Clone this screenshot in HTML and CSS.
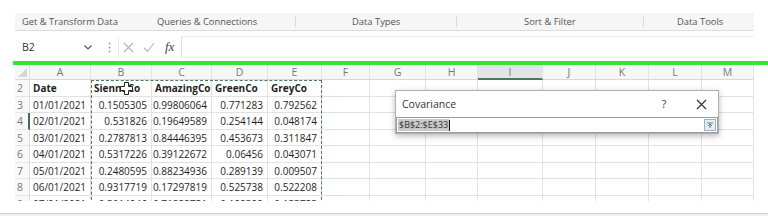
FILE: index.html
```html
<!DOCTYPE html>
<html>
<head>
<meta charset="utf-8">
<link rel="stylesheet" href="styles.css">
</head>
<body>
<div class="ribbon">
  <div class="grp g1">Get &amp; Transform Data</div>
  <div class="grp g2">Queries &amp; Connections</div>
  <div class="grp g3 sep">Data Types</div>
  <div class="grp g4 sep">Sort &amp; Filter</div>
  <div class="grp g5 sep">Data Tools</div>
</div>

<div class="formula">
  <div class="namebox"><span>B2</span>
    <svg width="8" height="5" viewBox="0 0 8 5"><path d="M0.5 0.5 L4 4 L7.5 0.5" fill="none" stroke="#555" stroke-width="1.2"/></svg>
  </div>
  <div class="dots"><svg width="3" height="11" viewBox="0 0 3 11"><circle cx="1.5" cy="1.5" r="0.9" fill="#999"/><circle cx="1.5" cy="5.5" r="0.9" fill="#999"/><circle cx="1.5" cy="9.5" r="0.9" fill="#999"/></svg></div>
  <div class="fxbtns">
    <svg class="ico" width="11" height="11" viewBox="0 0 11 11"><path d="M1 1 L10 10 M10 1 L1 10" stroke="#b4b4b4" stroke-width="1.1"/></svg>
    <svg class="ico" width="12" height="11" viewBox="0 0 12 11"><path d="M1 6 L4.5 9.5 L11 1" fill="none" stroke="#b4b4b4" stroke-width="1.1"/></svg>
    <span class="fx">fx</span>
  </div>
  <div class="finput"></div>
</div>

<div class="green"></div>

<div class="sheet">
  <div class="corner"><svg width="10" height="10" viewBox="0 0 10 10"><path d="M10 1 L10 10 L1 10 Z" fill="#d6d6d6"/></svg></div>
  <div class="ch">A</div><div class="ch">B</div><div class="ch">C</div><div class="ch">D</div><div class="ch">E</div><div class="ch">F</div><div class="ch">G</div><div class="ch">H</div><div class="ch act">I</div><div class="ch">J</div><div class="ch">K</div><div class="ch">L</div><div class="ch">M</div>

  <div class="rh">2</div><div class="c t b">Date</div><div class="c t b">SiennaCo</div><div class="c t b">AmazingCo</div><div class="c t b">GreenCo</div><div class="c t b">GreyCo</div><div class="c"></div><div class="c"></div><div class="c"></div><div class="c"></div><div class="c"></div><div class="c"></div><div class="c"></div><div class="c"></div>

  <div class="rh">3</div><div class="c t">01/01/2021</div><div class="c">0.1505305</div><div class="c">0.99806064</div><div class="c">0.771283</div><div class="c">0.792562</div><div class="c"></div><div class="c"></div><div class="c"></div><div class="c"></div><div class="c"></div><div class="c"></div><div class="c"></div><div class="c"></div>

  <div class="rh actr">4</div><div class="c t">02/01/2021</div><div class="c">0.531826</div><div class="c">0.19649589</div><div class="c">0.254144</div><div class="c">0.048174</div><div class="c"></div><div class="c"></div><div class="c"></div><div class="c"></div><div class="c"></div><div class="c"></div><div class="c"></div><div class="c"></div>

  <div class="rh">5</div><div class="c t">03/01/2021</div><div class="c">0.2787813</div><div class="c">0.84446395</div><div class="c">0.453673</div><div class="c">0.311847</div><div class="c"></div><div class="c"></div><div class="c"></div><div class="c"></div><div class="c"></div><div class="c"></div><div class="c"></div><div class="c"></div>

  <div class="rh">6</div><div class="c t">04/01/2021</div><div class="c">0.5317226</div><div class="c">0.39122672</div><div class="c">0.06456</div><div class="c">0.043071</div><div class="c"></div><div class="c"></div><div class="c"></div><div class="c"></div><div class="c"></div><div class="c"></div><div class="c"></div><div class="c"></div>

  <div class="rh">7</div><div class="c t">05/01/2021</div><div class="c">0.2480595</div><div class="c">0.88234936</div><div class="c">0.289139</div><div class="c">0.009507</div><div class="c"></div><div class="c"></div><div class="c"></div><div class="c"></div><div class="c"></div><div class="c"></div><div class="c"></div><div class="c"></div>

  <div class="rh">8</div><div class="c t">06/01/2021</div><div class="c">0.9317719</div><div class="c">0.17297819</div><div class="c">0.525738</div><div class="c">0.522208</div><div class="c"></div><div class="c"></div><div class="c"></div><div class="c"></div><div class="c"></div><div class="c"></div><div class="c"></div><div class="c"></div>

  <div class="rh">9</div><div class="c t">07/01/2021</div><div class="c">0.3014946</div><div class="c">0.71232751</div><div class="c">0.198399</div><div class="c">0.133753</div><div class="c"></div><div class="c"></div><div class="c"></div><div class="c"></div><div class="c"></div><div class="c"></div><div class="c"></div><div class="c"></div>

  <div class="ants"></div>
  <svg class="cursor" width="13" height="13" viewBox="0 0 13 13"><path d="M4.5 0.5 H8.5 V4.5 H12.5 V8.5 H8.5 V12.5 H4.5 V8.5 H0.5 V4.5 H4.5 Z" fill="#fff" stroke="#222" stroke-width="1"/></svg>
</div>

<div class="bottom"></div>

<div class="dialog">
  <div class="dtitle">
    <span class="dname">Covariance</span>
    <span class="help">?</span>
    <svg class="close" width="11" height="11" viewBox="0 0 11 11"><path d="M1 1 L10 10 M10 1 L1 10" stroke="#333" stroke-width="1.2"/></svg>
  </div>
  <div class="dinput">
    <span class="sel">$B$2:$E$33</span><span class="caret"></span>
    <span class="collapse"><svg width="8" height="8" viewBox="0 0 8 8"><path d="M1 2 H7 M4 3 V7 M2 5 L4 3 L6 5" fill="none" stroke="#5a7a9a" stroke-width="1"/></svg></span>
  </div>
</div>
</body>
</html>
```
FILE: styles.css
```css
* { box-sizing: border-box; margin: 0; padding: 0; }
body {
  width: 768px;
  height: 216px;
  overflow: hidden;
  background: #fff;
  font-family: "Open Sans", "Noto Sans", sans-serif;
  color: #222;
  position: relative;
}
.ribbon {
  display: flex;
  margin: 13px 0 0 15px;
  width: 739px;
  height: 18px;
  background: #f6f6f6;
  border-bottom: 1px solid #dcdcdc;
  font-size: 9.4px;
  color: #555;
  line-height: 17px;
}
.grp { position: relative; white-space: nowrap; }
.grp.sep::before {
  content: "";
  position: absolute;
  left: 0; top: 3px; height: 11px;
  border-left: 1px solid #dadada;
}
.g1 { width: 125px; padding-left: 7px; }
.g2 { width: 155px; padding-left: 17px; }
.g3 { width: 161px; padding-left: 57px; }
.g4 { width: 187px; padding-left: 68px; }
.g5 { width: 111px; padding-left: 34px; }

.formula {
  display: flex;
  align-items: center;
  margin: 5px 0 0 15px;
  width: 739px;
  height: 22px;
}
.namebox {
  width: 85px;
  height: 22px;
  display: flex;
  align-items: center;
  justify-content: space-between;
  padding: 0 8px 0 7px;
  font-size: 10.5px;
  color: #333;
}
.dots { width: 18px; display: flex; justify-content: center; }
.fxbtns {
  display: flex;
  align-items: center;
  height: 22px;
  width: 63px;
  padding-left: 4px;
  gap: 9px;
  border-left: 1px solid #ececec;
}
.fx {
  font-family: "Liberation Serif", serif;
  font-style: italic;
  font-size: 13px;
  color: #444;
  margin-left: 1px;
}
.finput {
  flex: 1;
  height: 22px;
  border-left: 1px solid #dedede;
  border-top: 1px solid #ededed;
  border-bottom: 1px solid #ededed;
}
.green {
  margin: 3px 0 0 13px;
  width: 755px;
  height: 4px;
  background: #38e038;
}
.sheet {
  position: relative;
  margin-left: 15px;
  width: 739px;
  height: 136px;
  overflow: hidden;
  display: grid;
  grid-template-columns: 15px 61px 61px 60px 56px 54px 48px 56px 52px 65px 53px 53px 53px 52px;
  grid-template-rows: 15px repeat(8, 16.5px);
  font-size: 10px;
}
.corner {
  background: #f7f7f7;
  border-right: 1px solid #e2e2e2;
  border-bottom: 1px solid #d8d8d8;
  display: flex;
  align-items: flex-end;
  justify-content: flex-end;
  padding: 0 2px 2px 0;
}
.ch {
  background: #f7f7f7;
  border-right: 1px solid #e2e2e2;
  border-bottom: 1px solid #d8d8d8;
  color: #777;
  text-align: center;
  line-height: 14px;
  font-size: 10.5px;
}
.ch.act { background: #e4e4e4; border-bottom: 2px solid #4b7a60; }
.rh {
  background: #f9f9f9;
  border-right: 1px solid #dcdcdc;
  border-bottom: 1px solid #e8e8e8;
  color: #777;
  padding-left: 2px;
  line-height: 16px;
  font-size: 10.5px;
}
.rh.actr { border-right: 2px solid #3f6d55; }
.c {
  border-right: 1px solid #e2e2e2;
  border-bottom: 1px solid #e2e2e2;
  text-align: right;
  padding-right: 4px;
  line-height: 16px;
  white-space: nowrap;
  overflow: hidden;
  color: #1e1e1e;
}
.c.t { text-align: left; padding: 0 0 0 3px; }
.c.b { font-weight: 700; }
.ants {
  position: absolute;
  left: 76px;
  top: 15px;
  width: 231px;
  height: 140px;
  border: 1.5px dashed #4a7a5e;
}
.cursor { position: absolute; left: 105px; top: 17px; }

.bottom {
  margin-top: 12px;
  height: 3px;
  border-top: 1px solid #d2d2d2;
  background: #efefef;
}
.dialog {
  position: absolute;
  left: 395px;
  top: 90px;
  width: 324px;
  height: 44px;
  background: #fff;
  border: 1px solid #b0b0b0;
  box-shadow: 0 2px 6px rgba(0,0,0,0.28);
  display: flex;
  flex-direction: column;
}
.dtitle {
  height: 26px;
  display: flex;
  align-items: center;
  padding-left: 6px;
  font-size: 10.5px;
  color: #333;
}
.dname { flex: 1; }
.help { width: 20px; text-align: center; font-size: 10.5px; color: #333; }
.close { margin: 0 11px 0 22px; }
.dinput {
  height: 16px;
  border: 1px solid #9c9c9c;
  display: flex;
  align-items: center;
  font-size: 9px;
  padding-left: 1px;
}
.sel { background: #c9c9c9; color: #333; padding: 0 1px; line-height: 12px; }
.caret { width: 1px; height: 11px; background: #111; }
.collapse {
  margin-left: auto;
  margin-right: 1px;
  width: 12px;
  height: 12px;
  border: 1px solid #9db0c4;
  background: #e6edf4;
  display: flex;
  align-items: center;
  justify-content: center;
}
```
